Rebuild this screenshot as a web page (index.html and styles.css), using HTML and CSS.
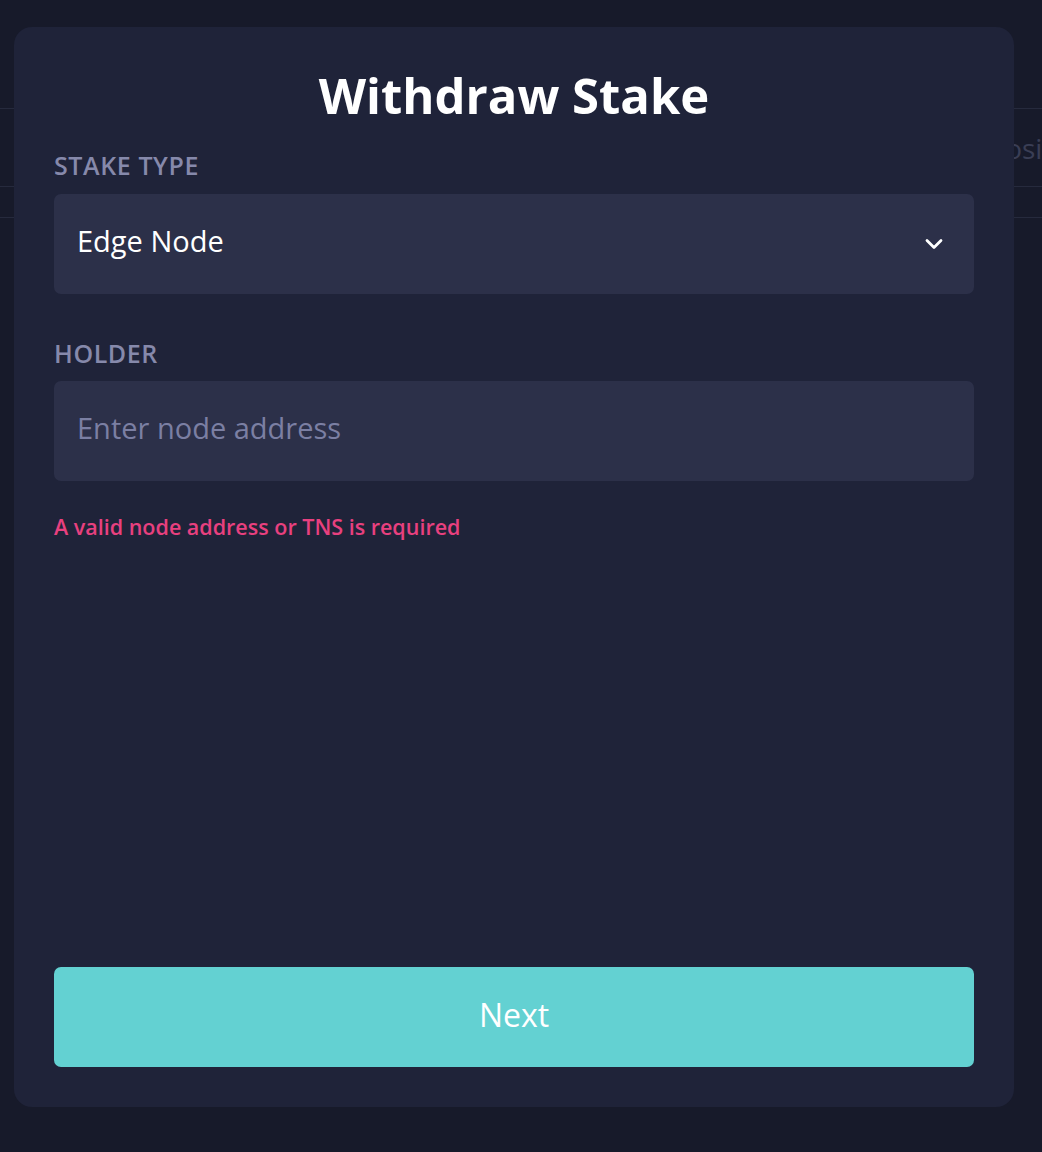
FILE: index.html
```html
<!DOCTYPE html>
<html lang="en">
<head>
<meta charset="utf-8">
<title>Withdraw Stake</title>
<link rel="stylesheet" href="styles.css">
</head>
<body>
<div class="page">
  <div class="table-head">
    <div class="col">Deposit</div>
  </div>
  <div class="table-row"></div>
</div>

<div class="modal">
  <h1 class="modal-title">Withdraw Stake</h1>
  <label class="field-label">STAKE TYPE</label>
  <div class="select">
    <span class="select-value">Edge Node</span>
    <svg class="chevron" width="20" height="12" viewBox="0 0 20 12" aria-hidden="true">
      <path d="M3 2.5 L10 9.5 L17 2.5" fill="none" stroke="#ffffff" stroke-width="2.8" stroke-linecap="round" stroke-linejoin="round"/>
    </svg>
  </div>
  <label class="field-label holder-label">HOLDER</label>
  <div class="input">
    <span class="placeholder">Enter node address</span>
  </div>
  <p class="error">A valid node address or TNS is required</p>
  <button class="btn-next">Next</button>
</div>
</body>
</html>
```

FILE: styles.css
```css
* { box-sizing: border-box; }

html, body {
  margin: 0;
  padding: 0;
  background: #171a2a;
  font-family: "Open Sans", "Noto Sans", sans-serif;
}

body {
  width: 1042px;
  height: 1152px;
  overflow: hidden;
  position: relative;
}

.page {
  padding-top: 108px;
}

.table-head {
  height: 79px;
  border-top: 1px solid #262a3d;
  border-bottom: 1px solid #262a3d;
  display: flex;
  align-items: center;
  padding-left: 952px;
}

.table-head .col {
  font-size: 28px;
  color: #3a3e55;
  white-space: nowrap;
}

.table-row {
  height: 31px;
  border-bottom: 1px solid #262a3d;
}

.modal {
  position: absolute;
  left: 14px;
  top: 27px;
  width: 1000px;
  height: 1080px;
  background: #1f2339;
  border-radius: 18px;
  padding: 38px 40px 40px;
  display: flex;
  flex-direction: column;
}

.modal-title {
  margin: 0;
  text-align: center;
  color: #ffffff;
  font-size: 49px;
  line-height: 60px;
  font-weight: 700;
}

.field-label {
  display: block;
  margin-top: 25px;
  font-size: 25px;
  line-height: 30px;
  font-weight: 600;
  color: #8689ab;
  letter-spacing: 0.6px;
}

.holder-label {
  margin-top: 44px;
}

.select,
.input {
  margin-top: 14px;
  height: 100px;
  background: #2c3049;
  border-radius: 7px;
  display: flex;
  align-items: center;
  padding: 0 30px 0 23px;
}

.input {
  margin-top: 13px;
}

.select-value,
.placeholder {
  font-size: 29px;
  line-height: 40px;
  padding-bottom: 6px;
}

.select-value {
  flex: 1;
  color: #ffffff;
}

.placeholder {
  color: #7b7fa3;
}

.chevron {
  display: block;
}

.error {
  margin: 32px 0 0;
  font-size: 21.5px;
  line-height: 28px;
  font-weight: 600;
  color: #e8407f;
}

.btn-next {
  margin-top: auto;
  height: 100px;
  width: 100%;
  border: none;
  border-radius: 7px;
  background: #63d1d2;
  color: #ffffff;
  font-family: inherit;
  font-size: 32px;
  padding: 0 0 6px;
}
```
